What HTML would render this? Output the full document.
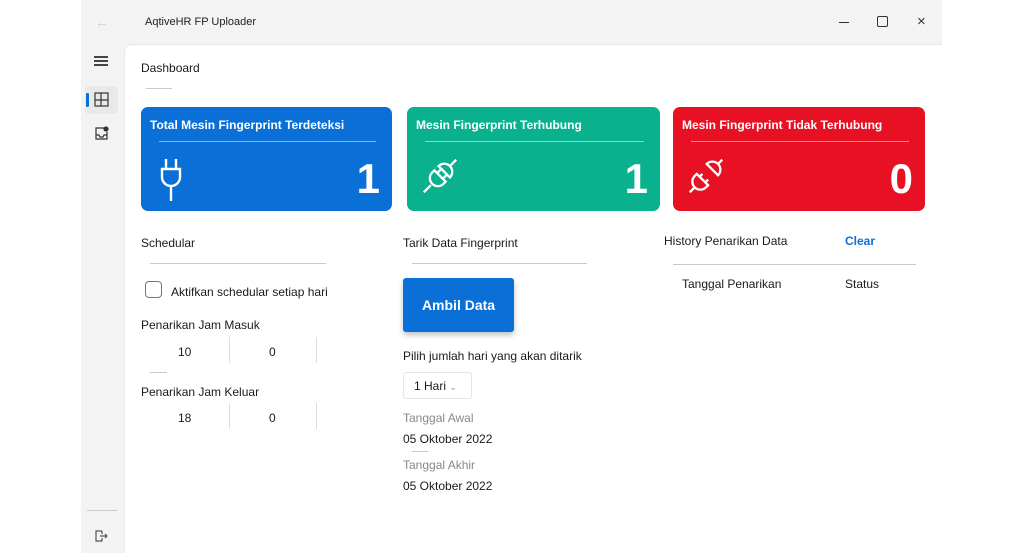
<!DOCTYPE html>
<html><head><meta charset="utf-8"><style>
*{margin:0;padding:0;box-sizing:border-box}
body{width:1024px;height:555px;background:#fff;position:relative;font-family:"Liberation Sans",sans-serif;overflow:hidden;color:#1a1a1a}
.win{position:absolute;left:81px;top:0;width:861px;height:553px;background:#f3f3f3}
.content{position:absolute;left:124px;top:44px;width:818px;height:509px;background:#fff;border-top-left-radius:8px;border-left:1px solid #e8e8e8;border-top:1px solid #e8e8e8}
.abs{position:absolute}
.t{position:absolute;font-size:12px;white-space:nowrap}
.card{position:absolute;top:107px;height:104px;border-radius:7px;color:#fff}
.card .h{position:absolute;left:9px;top:11px;font-size:12px;font-weight:bold}
.card .ln{position:absolute;left:18px;right:16px;top:34px;height:1px;background:rgba(255,255,255,.5)}
.card .n{position:absolute;right:12px;top:48px;font-size:42px;font-weight:bold}
.card svg{position:absolute;left:10px;top:46px}
.hr{position:absolute;height:1px;background:#c8c8c8}
</style></head><body>
<div class="win"></div>
<div class="t" style="left:95px;top:14px;color:#ccc;font-size:14px">←</div>
<div class="t" style="left:145px;top:16px;font-size:11px;color:#222">AqtiveHR FP Uploader</div>
<div class="abs" style="left:839px;top:22px;width:10px;height:1px;background:#333"></div>
<div class="abs" style="left:877px;top:16px;width:11px;height:11px;border:1px solid #333;border-radius:2px"></div>
<div class="t" style="left:917px;top:13px;font-size:15px;color:#333">×</div>
<div class="abs" style="left:94px;top:56px;width:14px;height:1.5px;background:#444;box-shadow:0 4px 0 #444,0 8px 0 #444"></div>
<div class="abs" style="left:85px;top:86px;width:33px;height:28px;background:#e9e9e9;border-radius:4px"></div>
<div class="abs" style="left:86px;top:93px;width:3px;height:14px;background:#0a6fd6;border-radius:2px"></div>
<svg class="abs" style="left:94px;top:92px" width="15" height="15" viewBox="0 0 15 15" fill="none" stroke="#333" stroke-width="1.2"><rect x="1" y="1" width="13" height="13"/><path d="M7 1V14M7 8H14M1 8H7"/></svg>
<svg class="abs" style="left:94px;top:126px" width="15" height="15" viewBox="0 0 15 15" fill="none" stroke="#333" stroke-width="1.2"><path d="M10 2H2V13H13V6"/><path d="M2 9H5L6 11H9L10 9H13"/><circle cx="12" cy="3" r="2" fill="#333"/></svg>
<div class="abs" style="left:87px;top:510px;width:30px;height:1px;background:#ccc"></div>
<svg class="abs" style="left:95px;top:530px" width="13" height="12" viewBox="0 0 13 12" fill="none" stroke="#555" stroke-width="1.2"><path d="M7 1H1V11H7V8M7 4V1"/><path d="M5 6H12M10 4L12 6L10 8"/></svg>
<div class="content"></div>
<div class="t" style="left:141px;top:61px">Dashboard</div>
<div class="hr" style="left:146px;top:88px;width:26px"></div>
<div class="card" style="left:141px;width:251px;background:#0a6fd6"><div class="h">Total Mesin Fingerprint Terdeteksi</div><div class="ln"></div>
<svg width="26" height="46" viewBox="0 0 26 46" fill="none" stroke="#fff" stroke-width="2.4" style="left:18px;top:50px"><path d="M7 2V12M17 2V12M3 12H21V20A9 9 0 0 1 3 20Z"/><path d="M12 29V44"/></svg><div class="n">1</div></div>
<div class="card" style="left:407px;width:253px;background:#0ab18f"><div class="h">Mesin Fingerprint Terhubung</div><div class="ln"></div>
<svg width="46" height="46" viewBox="0 0 46 46" fill="none" stroke="#fff" stroke-width="2.3"><g transform="rotate(45 23 23)"><path d="M23 0V9M23 36V46M19 17V22M27 17V22"/><path d="M15 17A8 8 0 0 1 31 17H15Z"/><path d="M15 23H31V26A8 8 0 0 1 15 26Z"/></g></svg><div class="n">1</div></div>
<div class="card" style="left:673px;width:252px;background:#e81123"><div class="h">Mesin Fingerprint Tidak Terhubung</div><div class="ln"></div>
<svg width="46" height="46" viewBox="0 0 46 46" fill="none" stroke="#fff" stroke-width="2.3"><g transform="rotate(45 23 23)"><path d="M23 0V6M23 40V46M19 24V28M27 24V28"/><path d="M15 14A8 8 0 0 1 31 14H15Z"/><path d="M15 28H31V31A8 8 0 0 1 15 31Z"/></g></svg><div class="n">0</div></div>
<div class="t" style="left:141px;top:236px">Schedular</div>
<div class="hr" style="left:150px;top:263px;width:176px"></div>
<div class="abs" style="left:145px;top:281px;width:17px;height:17px;border:1px solid #777;border-radius:4px"></div>
<div class="t" style="left:171px;top:285px">Aktifkan schedular setiap hari</div>
<div class="t" style="left:141px;top:318px">Penarikan Jam Masuk</div>
<div class="t" style="left:178px;top:345px">10</div>
<div class="abs" style="left:229px;top:337px;width:1px;height:26px;background:#ddd"></div>
<div class="t" style="left:269px;top:345px">0</div>
<div class="abs" style="left:316px;top:337px;width:1px;height:26px;background:#ddd"></div>
<div class="hr" style="left:150px;top:372px;width:17px"></div>
<div class="t" style="left:141px;top:385px">Penarikan Jam Keluar</div>
<div class="t" style="left:178px;top:411px">18</div>
<div class="abs" style="left:229px;top:403px;width:1px;height:26px;background:#ddd"></div>
<div class="t" style="left:269px;top:411px">0</div>
<div class="abs" style="left:316px;top:403px;width:1px;height:26px;background:#ddd"></div>
<div class="t" style="left:403px;top:236px">Tarik Data Fingerprint</div>
<div class="hr" style="left:412px;top:263px;width:175px"></div>
<div class="abs" style="left:403px;top:278px;width:111px;height:54px;background:#0a6fd6;border-radius:3px;box-shadow:0 3px 6px rgba(0,0,0,.25);color:#fff;font-weight:bold;font-size:14px;text-align:center;line-height:54px">Ambil Data</div>
<div class="t" style="left:403px;top:349px">Pilih jumlah hari yang akan ditarik</div>
<div class="abs" style="left:403px;top:372px;width:69px;height:27px;border:1px solid #e5e5e5;border-radius:3px"></div>
<div class="t" style="left:414px;top:379px">1 Hari <span style="color:#999;font-size:9px">&#8964;</span></div>
<div class="t" style="left:403px;top:411px;color:#888">Tanggal Awal</div>
<div class="t" style="left:403px;top:432px">05 Oktober 2022</div>
<div class="hr" style="left:412px;top:451px;width:16px"></div>
<div class="t" style="left:403px;top:458px;color:#888">Tanggal Akhir</div>
<div class="t" style="left:403px;top:479px">05 Oktober 2022</div>
<div class="t" style="left:664px;top:234px">History Penarikan Data</div>
<div class="t" style="left:845px;top:234px;color:#0a6fd6;font-weight:bold">Clear</div>
<div class="hr" style="left:673px;top:264px;width:243px"></div>
<div class="t" style="left:682px;top:277px">Tanggal Penarikan</div>
<div class="t" style="left:845px;top:277px">Status</div>
</body></html>
